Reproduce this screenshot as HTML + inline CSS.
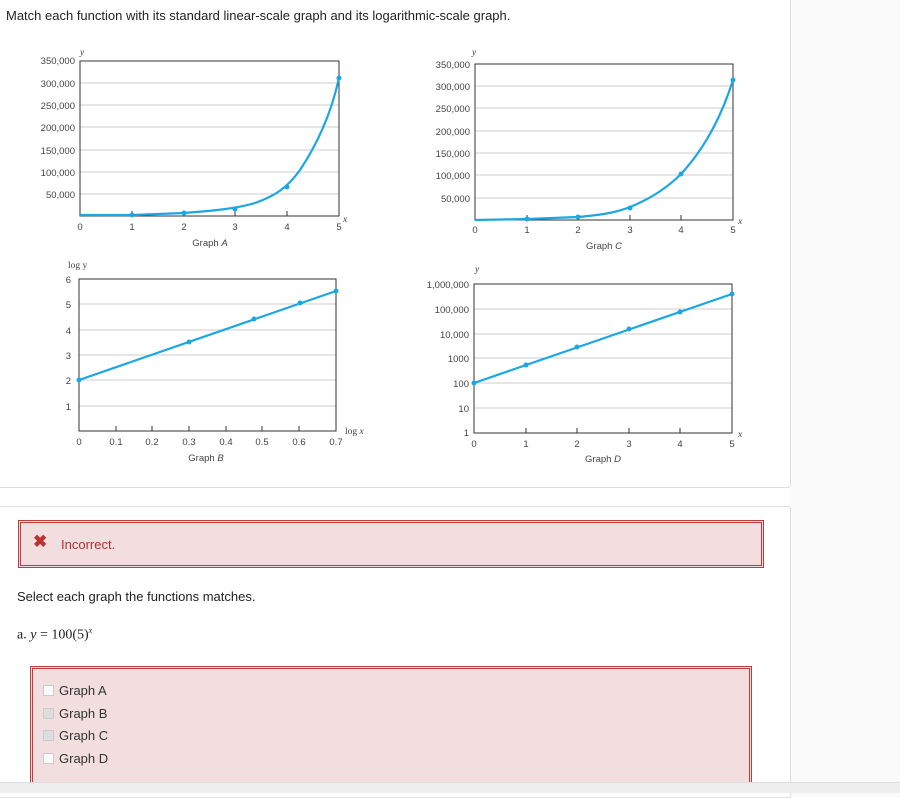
<!DOCTYPE html>
<html><head><meta charset="utf-8"><style>
body{margin:0;width:900px;height:792px;background:#fafafa;font-family:"Liberation Sans",sans-serif;position:relative;overflow:hidden}
.bgw{position:absolute;left:0;top:0;width:791px;height:792px;background:#fff}
.p1{position:absolute;left:-2px;top:-2px;width:791px;height:488px;background:#fff;border:1px solid #ddd;border-radius:0 0 3px 0}
.p2{position:absolute;left:-2px;top:506px;width:791px;height:290px;background:#fff;border:1px solid #ddd;border-radius:0 3px 0 0}
.t{position:absolute;font-size:13px;color:#222}
.err{position:absolute;left:18px;top:520px;width:744px;height:46px;background:#f2dede;border:1px solid #c03b3b;box-shadow:inset 0 0 0 1px #f2dede,inset 0 0 0 2px #c03b3b}
.ans{position:absolute;left:30px;top:666px;width:720px;height:120px;background:#f2dede;border:1px solid #c03b3b;box-shadow:inset 0 0 0 1px #f2dede,inset 0 0 0 2px #c03b3b}
.cb{position:absolute;left:12px;width:9px;height:9px;border:1px solid #ccc;background:#fafafa}
.cb.c{background:#ddd}
.lab{position:absolute;left:28px;font-size:13px;color:#333}
.bar{position:absolute;left:0;top:782px;width:900px;height:10px;background:#eee;border-top:1px solid #ddd}
svg text{font-family:"Liberation Sans",sans-serif;font-size:9.5px;fill:#444}
</style></head><body>
<div class="bgw"></div>
<div class="p1"></div>
<div class="p2"></div>
<div class="t" style="left:6px;top:8px;font-size:13px">Match each function with its standard linear-scale graph and its logarithmic-scale graph.</div>
<svg width="790" height="486" style="position:absolute;left:0;top:0">
<g stroke="#ccc" stroke-width="1">
<line x1="80" y1="83" x2="339" y2="83"/><line x1="80" y1="105" x2="339" y2="105"/><line x1="80" y1="127" x2="339" y2="127"/><line x1="80" y1="150" x2="339" y2="150"/><line x1="80" y1="172" x2="339" y2="172"/><line x1="80" y1="194" x2="339" y2="194"/>
<line x1="475" y1="86" x2="733" y2="86"/><line x1="475" y1="108" x2="733" y2="108"/><line x1="475" y1="131" x2="733" y2="131"/><line x1="475" y1="153" x2="733" y2="153"/><line x1="475" y1="175" x2="733" y2="175"/><line x1="475" y1="198" x2="733" y2="198"/>
<line x1="79" y1="304" x2="336" y2="304"/><line x1="79" y1="330" x2="336" y2="330"/><line x1="79" y1="355" x2="336" y2="355"/><line x1="79" y1="380" x2="336" y2="380"/><line x1="79" y1="406" x2="336" y2="406"/>
<line x1="474" y1="309" x2="732" y2="309"/><line x1="474" y1="334" x2="732" y2="334"/><line x1="474" y1="358" x2="732" y2="358"/><line x1="474" y1="383" x2="732" y2="383"/><line x1="474" y1="408" x2="732" y2="408"/>
</g>
<g fill="none" stroke="#333" stroke-width="1">
<rect x="80" y="61" width="259" height="155"/><rect x="475" y="64" width="258" height="156"/>
<rect x="79" y="279" width="257" height="152"/><rect x="474" y="284" width="258" height="149"/>
<path d="M132 211v5M184 211v5M235 211v5M287 211v5M527 215v5M578 215v5M630 215v5M681 215v5M116 426v5M152 426v5M189 426v5M226 426v5M262 426v5M299 426v5M526 428v5M577 428v5M629 428v5M680 428v5"/>
</g>
<g fill="none" stroke="#1ba6e4" stroke-width="2.2">
<path d="M80 215 L132 215 L184 213 C210 211 235 209 255 203 C275 196 287 188 300 170 C320 140 332 110 339 78"/>
<path d="M475 220 L527 219 L578 217 C600 215 615 213 630 207 C655 197 670 185 681 174 C705 148 722 115 733 80"/>
<path d="M79 380 L336 291"/><path d="M474 383 L732 294"/>
</g>
<g fill="#1ba6e4">
<circle cx="132" cy="215" r="2.5"/><circle cx="184" cy="213" r="2.5"/><circle cx="235" cy="209" r="2.5"/><circle cx="287" cy="187" r="2.5"/><circle cx="339" cy="78" r="2.5"/>
<circle cx="527" cy="219" r="2.5"/><circle cx="578" cy="217" r="2.5"/><circle cx="630" cy="208" r="2.5"/><circle cx="681" cy="174" r="2.5"/><circle cx="733" cy="80" r="2.5"/>
<circle cx="79" cy="380" r="2.5"/><circle cx="189" cy="342" r="2.5"/><circle cx="254" cy="319" r="2.5"/><circle cx="300" cy="303" r="2.5"/><circle cx="336" cy="291" r="2.5"/>
<circle cx="474" cy="383" r="2.5"/><circle cx="526" cy="365" r="2.5"/><circle cx="577" cy="347" r="2.5"/><circle cx="629" cy="329" r="2.5"/><circle cx="680" cy="312" r="2.5"/><circle cx="732" cy="294" r="2.5"/>
</g>
<g text-anchor="end">
<text x="75" y="64">350,000</text><text x="75" y="87">300,000</text><text x="75" y="109">250,000</text><text x="75" y="131">200,000</text><text x="75" y="154">150,000</text><text x="75" y="176">100,000</text><text x="75" y="198">50,000</text>
<text x="470" y="68">350,000</text><text x="470" y="90">300,000</text><text x="470" y="112">250,000</text><text x="470" y="135">200,000</text><text x="470" y="157">150,000</text><text x="470" y="179">100,000</text><text x="470" y="202">50,000</text>
<text x="71" y="283">6</text><text x="71" y="308">5</text><text x="71" y="334">4</text><text x="71" y="359">3</text><text x="71" y="384">2</text><text x="71" y="410">1</text>
<text x="469" y="288">1,000,000</text><text x="469" y="313">100,000</text><text x="469" y="338">10,000</text><text x="469" y="362">1000</text><text x="469" y="387">100</text><text x="469" y="412">10</text><text x="469" y="436">1</text>
</g>
<g text-anchor="middle">
<text x="80" y="230">0</text><text x="132" y="230">1</text><text x="184" y="230">2</text><text x="235" y="230">3</text><text x="287" y="230">4</text><text x="339" y="230">5</text>
<text x="475" y="233">0</text><text x="527" y="233">1</text><text x="578" y="233">2</text><text x="630" y="233">3</text><text x="681" y="233">4</text><text x="733" y="233">5</text>
<text x="79" y="445">0</text><text x="116" y="445">0.1</text><text x="152" y="445">0.2</text><text x="189" y="445">0.3</text><text x="226" y="445">0.4</text><text x="262" y="445">0.5</text><text x="299" y="445">0.6</text><text x="336" y="445">0.7</text>
<text x="474" y="447">0</text><text x="526" y="447">1</text><text x="577" y="447">2</text><text x="629" y="447">3</text><text x="680" y="447">4</text><text x="732" y="447">5</text>
<text x="210" y="246">Graph <tspan font-style="italic">A</tspan></text><text x="604" y="249">Graph <tspan font-style="italic">C</tspan></text>
<text x="206" y="461">Graph <tspan font-style="italic">B</tspan></text><text x="603" y="462">Graph <tspan font-style="italic">D</tspan></text>
</g>
<g>
<text x="80" y="55" style="font-family:'Liberation Serif',serif;font-style:italic">y</text>
<text x="472" y="55" style="font-family:'Liberation Serif',serif;font-style:italic">y</text>
<text x="475" y="272" style="font-family:'Liberation Serif',serif;font-style:italic">y</text>
<text x="343" y="222" style="font-family:'Liberation Serif',serif;font-style:italic">x</text>
<text x="738" y="224" style="font-family:'Liberation Serif',serif;font-style:italic">x</text>
<text x="738" y="437" style="font-family:'Liberation Serif',serif;font-style:italic">x</text>
<text x="68" y="268" style="font-family:'Liberation Serif',serif">log y</text>
<text x="345" y="434" style="font-family:'Liberation Serif',serif">log <tspan font-style="italic">x</tspan></text>
</g>
</svg>
<div class="err"><span style="position:absolute;left:14px;top:11px;color:#b33;font-size:17px;font-weight:bold">✖</span><span style="position:absolute;left:42px;top:16px;color:#a33;font-size:13px">Incorrect.</span></div>
<div class="t" style="left:17px;top:589px">Select each graph the functions matches.</div>
<div class="t" style="left:17px;top:626px;font-family:'Liberation Serif',serif;font-size:14px">a. <i>y</i> = 100(5)<sup style="font-size:8px"><i>x</i></sup></div>
<div class="ans">
<div class="cb" style="top:18px"></div><div class="lab" style="top:16px">Graph A</div>
<div class="cb c" style="top:41px"></div><div class="lab" style="top:39px">Graph B</div>
<div class="cb c" style="top:63px"></div><div class="lab" style="top:61px">Graph C</div>
<div class="cb" style="top:86px"></div><div class="lab" style="top:84px">Graph D</div>
</div>
<div class="bar"></div>
</body></html>
